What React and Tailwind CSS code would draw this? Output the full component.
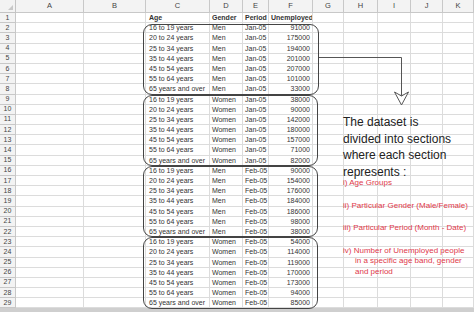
const COLS = ['A', 'B', 'C', 'D', 'E', 'F', 'G', 'H', 'I', 'J', 'K']

const AGES = [
  '16 to 19 years',
  '20 to 24 years',
  '25 to 34 years',
  '35 to 44 years',
  '45 to 54 years',
  '55 to 64 years',
  '65 years and over',
]

const GROUPS = [
  { gender: 'Men', period: 'Jan-05', values: [91000, 175000, 194000, 201000, 207000, 101000, 33000] },
  { gender: 'Women', period: 'Jan-05', values: [38000, 90000, 142000, 180000, 157000, 71000, 82000] },
  { gender: 'Men', period: 'Feb-05', values: [90000, 154000, 176000, 184000, 186000, 98000, 38000] },
  { gender: 'Women', period: 'Feb-05', values: [54000, 114000, 119000, 170000, 173000, 94000, 85000] },
]

const ROWS = [
  { age: 'Age', gender: 'Gender', period: 'Period', value: 'Unemployed', head: true },
  ...GROUPS.flatMap(g => g.values.map((v, i) => ({ age: AGES[i], gender: g.gender, period: g.period, value: v }))),
]

const cell = 'border-r border-b border-[#dcdcdc] px-[2px] leading-[10px] whitespace-nowrap overflow-hidden'

export default function App() {
  return (
    <div className="relative w-[474px] h-[312px] overflow-hidden bg-white text-[#333]" style={{ fontFamily: '"Liberation Sans", Arial, sans-serif' }}>
      <div className="grid grid-cols-[16px_68px_62px_64px_33px_26px_44px_31px_34px_33px_32px_31px] grid-rows-[13px_repeat(29,10.2px)] text-[7px]">
        {/* column headers */}
        <div className="relative bg-[#f3f3f3] border-r border-b border-[#c4c4c4]">
          <div className="absolute right-[2px] bottom-[2px] w-0 h-0 border-l-[5px] border-l-transparent border-b-[5px] border-b-[#c8c8c8]" />
        </div>
        {COLS.map(c => (
          <div key={c} className="bg-[#f3f3f3] border-r border-b border-[#c8c8c8] flex items-center justify-center text-[7.5px] text-[#444]">
            {c}
          </div>
        ))}

        {ROWS.map((r, i) => (
          <div key={i} className="contents">
            <div className="bg-[#f3f3f3] border-r border-b border-[#c8c8c8] flex items-center justify-center text-[7px] text-[#444] leading-[10px]">
              {i + 1}
            </div>
            <div className={cell} />
            <div className={cell} />
            <div className={`${cell} pl-[3px] ${r.head ? 'font-bold' : ''}`}>{r.age}</div>
            <div className={`${cell} ${r.head ? 'font-bold' : ''}`}>{r.gender}</div>
            <div className={`${cell} ${r.head ? 'font-bold' : ''}`}>{r.period}</div>
            <div className={`${cell} text-right ${r.head ? 'font-bold' : ''}`}>{r.value}</div>
            <div className={cell} />
            <div className={cell} />
            <div className={cell} />
            <div className={cell} />
            <div className={cell} />
          </div>
        ))}
      </div>
      <div className="h-[4px] bg-[#cfcfcf]" />

      {/* section outlines */}
      <div className="absolute left-[143px] top-[23.5px] w-[176px] h-[71px] border border-[#444] rounded-[9px]" />
      <div className="absolute left-[143px] top-[94.6px] w-[175px] h-[71.4px] border border-[#444] rounded-[9px]" />
      <div className="absolute left-[143px] top-[166px] w-[175px] h-[71.4px] border border-[#444] rounded-[9px]" />
      <div className="absolute left-[143px] top-[237.4px] w-[175px] h-[71.4px] border border-[#444] rounded-[9px]" />

      {/* arrow */}
      <svg className="absolute left-0 top-0" width="474" height="312" viewBox="0 0 474 312">
        <path d="M319 57.5 H401.5 V96" fill="none" stroke="#555" strokeWidth="1" />
        <path d="M394.5 92 L401.5 96 L408.5 92 L401.5 105 Z" fill="white" stroke="#555" strokeWidth="1" strokeLinejoin="round" />
      </svg>

      {/* explanation */}
      <div className="absolute left-[343px] top-[114px] text-[12px] leading-[16.5px] text-[#222] whitespace-nowrap">
        <div>The dataset is</div>
        <div>divided into sections</div>
        <div>where each section</div>
        <div>represents :</div>
      </div>
      <div className="absolute left-[343px] top-[178px] text-[8px] leading-[10.5px] text-[#e0394a] whitespace-nowrap">
        <div>i) Age Groups</div>
        <div className="mt-[12px]">ii) Particular Gender (Male/Female)</div>
        <div className="mt-[12px]">iii) Particular Period (Month - Date)</div>
        <div className="mt-[12px]">iv) Number of Unemployed people</div>
        <div className="pl-[12px]">in a specific age band, gender</div>
        <div className="pl-[12px]">and period</div>
      </div>
    </div>
  )
}
